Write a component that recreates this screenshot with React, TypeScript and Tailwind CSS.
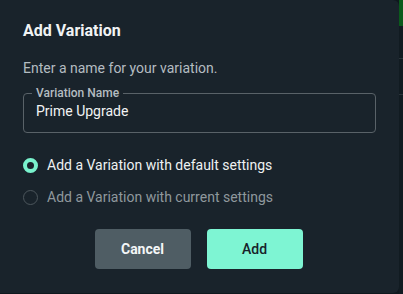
import React, { useState } from 'react';

export default function App() {
  const [mode, setMode] = useState<'default' | 'current'>('default');
  const [name, setName] = useState('Prime Upgrade');

  return (
    <div
      className="flex h-[294px] w-[403px] overflow-hidden bg-[#0f181e]"
      style={{ fontFamily: 'Roboto, "Noto Sans", sans-serif' }}
    >
      <div className="flex h-[293px] w-[399px] shrink-0 flex-col rounded-tr-md rounded-br-md bg-[#19232b] px-[23px] pt-[20px]">
        <h2 className="text-[16px] font-bold leading-[22px] text-[#f1f3f4]">Add Variation</h2>
        <p className="mt-[16px] text-[14px] leading-[20px] text-[#b4bcc1]">Enter a name for your variation.</p>

        <fieldset className="mt-[9px] h-[46px] rounded border border-[#596268] px-[8px]">
          <legend className="px-[4px] text-[12px] font-medium leading-[12px] text-[#b4bcc1]">Variation Name</legend>
          <input
            value={name}
            onChange={(e) => setName(e.target.value)}
            className="-mt-[1px] w-full bg-transparent px-[4px] text-[14px] leading-[20px] text-[#f1f3f4] outline-none"
          />
        </fieldset>

        <div className="mt-[22px] flex flex-col gap-[12px]">
          <label className="flex cursor-pointer items-center gap-[9px]" onClick={() => setMode('default')}>
            <span
              className={
                mode === 'default'
                  ? 'h-[15px] w-[15px] rounded-full border-[4px] border-[#79f2cd] bg-[#19232b]'
                  : 'h-[15px] w-[15px] rounded-full border border-[#4c565c]'
              }
            />
            <span className={mode === 'default' ? 'text-[14px] leading-[20px] text-[#eef1f2]' : 'text-[14px] leading-[20px] text-[#8f989d]'}>
              Add a Variation with default settings
            </span>
          </label>
          <label className="flex cursor-pointer items-center gap-[9px]" onClick={() => setMode('current')}>
            <span
              className={
                mode === 'current'
                  ? 'h-[15px] w-[15px] rounded-full border-[4px] border-[#79f2cd] bg-[#19232b]'
                  : 'h-[15px] w-[15px] rounded-full border border-[#4c565c]'
              }
            />
            <span className={mode === 'current' ? 'text-[14px] leading-[20px] text-[#eef1f2]' : 'text-[14px] leading-[20px] text-[#8f989d]'}>
              Add a Variation with current settings
            </span>
          </label>
        </div>

        <div className="mt-[22px] flex justify-center gap-[16px] pr-[2px]">
          <button className="h-[40px] w-[96px] rounded bg-[#4f5d64] text-[14px] font-bold text-[#f4f6f7]">Cancel</button>
          <button className="h-[40px] w-[96px] rounded bg-[#7ef5d3] text-[14px] font-medium text-[#17222a]">Add</button>
        </div>
      </div>

      <div className="flex w-[4px] flex-col">
        <div className="h-[26px] bg-[#0b5a1c]" />
        <div className="h-[32px] bg-[#111b21]" />
        <div className="h-px bg-[#2a343a]" />
        <div className="h-[35px] bg-[#111b21]" />
        <div className="h-px bg-[#2a343a]" />
        <div className="flex-1 bg-[#111b21]" />
      </div>
    </div>
  );
}
